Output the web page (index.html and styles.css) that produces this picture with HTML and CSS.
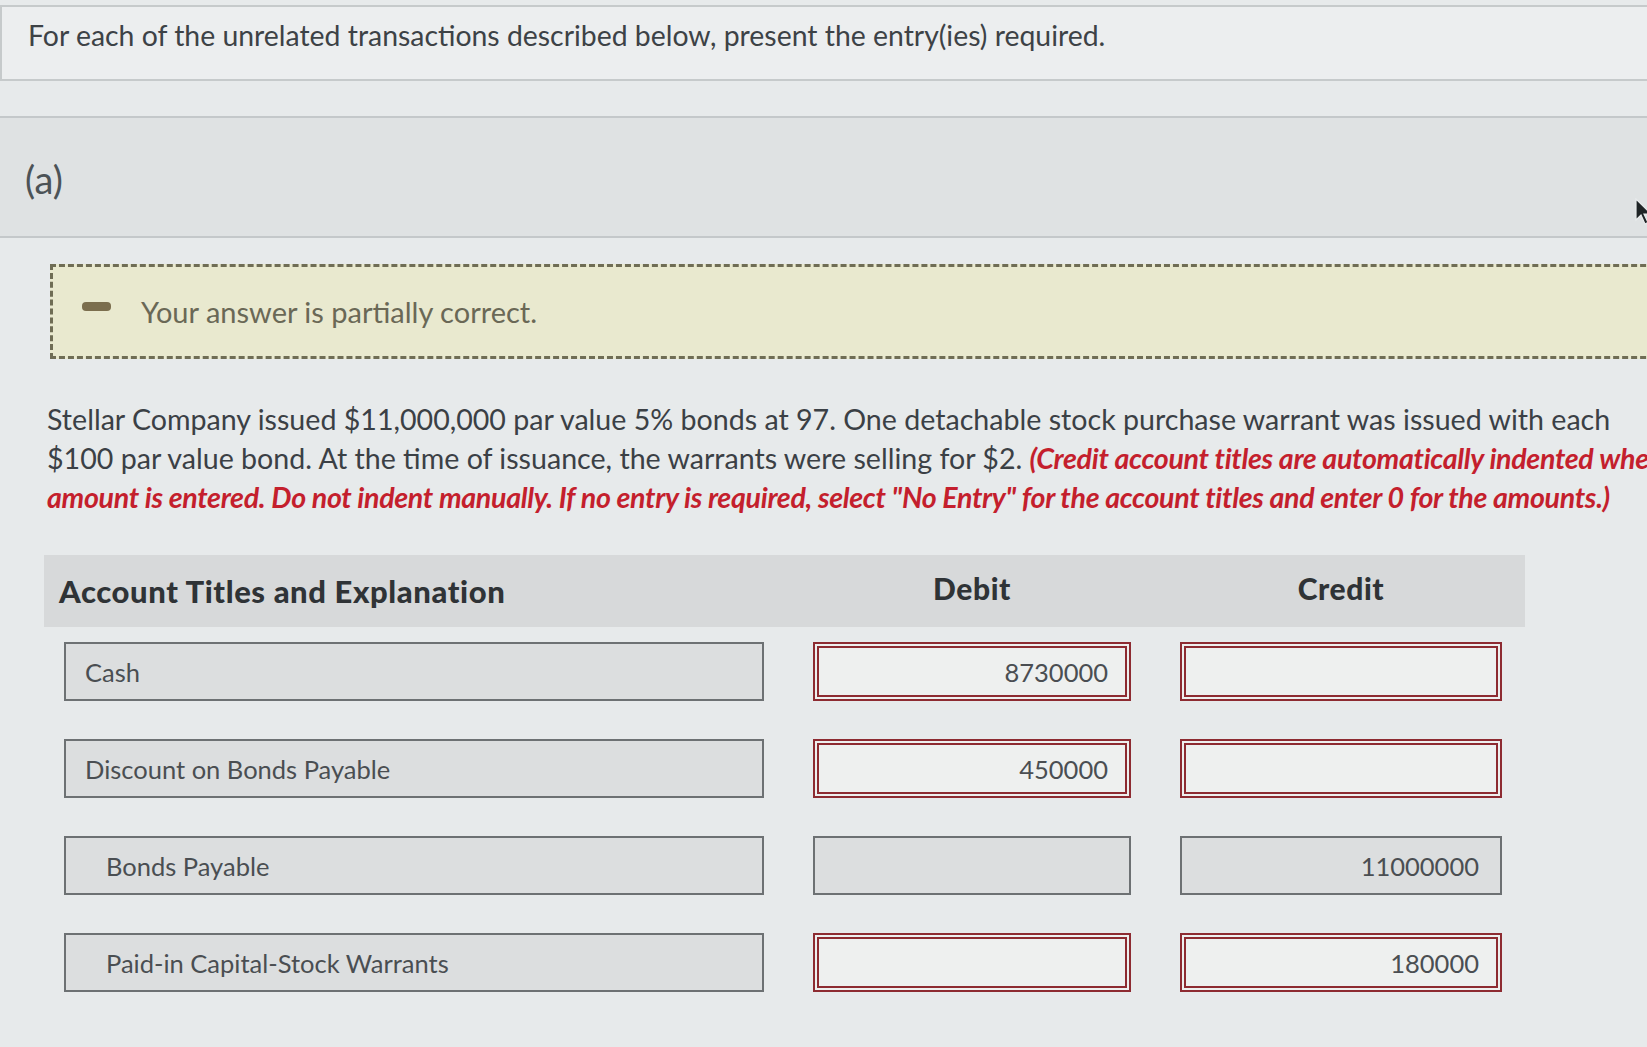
FILE: index.html
```html
<!DOCTYPE html>
<html lang="en">
<head>
<meta charset="utf-8">
<title>Journal entry</title>
<link rel="stylesheet" href="styles.css">
</head>
<body>
<div class="page">
  <div class="intro">For each of the unrelated transactions described below, present the entry(ies) required.</div>
  <div class="part-head">(a)</div>
  <div class="content">
    <div class="feedback"><span class="minus"></span><span class="feedback-text">Your answer is partially correct.</span></div>
    <p class="problem">Stellar Company issued $11,000,000 par value 5% bonds at 97. One detachable stock purchase warrant was issued with each<br>$100 par value bond. At the time of issuance, the warrants were selling for $2. <em class="note">(Credit account titles are automatically indented when the</em><br><em class="note">amount is entered. Do not indent manually. If no entry is required, select "No Entry" for the account titles and enter 0 for the amounts.)</em></p>
    <div class="journal">
      <div class="jhead">
        <div class="jh-acct">Account Titles and Explanation</div>
        <div class="jh-col">Debit</div>
        <div class="jh-col">Credit</div>
      </div>
      <div class="jrows">
        <div class="jrow">
          <div class="acct">Cash</div>
          <div class="amt wrong">8730000</div>
          <div class="amt wrong"></div>
        </div>
        <div class="jrow">
          <div class="acct">Discount on Bonds Payable</div>
          <div class="amt wrong">450000</div>
          <div class="amt wrong"></div>
        </div>
        <div class="jrow">
          <div class="acct indent">Bonds Payable</div>
          <div class="amt"></div>
          <div class="amt">11000000</div>
        </div>
        <div class="jrow">
          <div class="acct indent">Paid-in Capital-Stock Warrants</div>
          <div class="amt wrong"></div>
          <div class="amt wrong">180000</div>
        </div>
      </div>
    </div>
  </div>
  <svg class="cursor" width="20" height="30" viewBox="0 0 20 30"><path d="M2 1 L2 22 L7 17 L11 26 L14 24.5 L10 16 L17 16 Z" fill="#1f2426" stroke="#e8ebec" stroke-width="1.2"/></svg>
</div>
</body>
</html>
```

FILE: styles.css
```css
html, body {
  margin: 0;
  padding: 0;
}
body {
  background: #e7eaeb;
  overflow: hidden;
  font-family: Lato, "Open Sans", "Liberation Sans", sans-serif;
  color: #3c4145;
}
.page {
  position: relative;
  width: 1700px;
  height: 1047px;
  padding-top: 5px;
  box-sizing: border-box;
}
.intro {
  height: 76px;
  box-sizing: border-box;
  border: 2px solid #c6cacb;
  background: #eceeef;
  padding: 11px 0 0 26px;
  font-size: 28.4px;
  line-height: 34px;
  color: #3d4246;
}
.part-head {
  margin-top: 35px;
  height: 122px;
  box-sizing: border-box;
  border-top: 2px solid #c4c8ca;
  border-bottom: 2px solid #c4c8ca;
  background: #dfe2e3;
  display: flex;
  align-items: center;
  padding-left: 25px;
  padding-top: 4px;
  font-size: 38px;
  color: #4c5357;
}
.content {
  padding-left: 44px;
}
.feedback {
  margin-top: 26px;
  margin-left: 6px;
  height: 95px;
  box-sizing: border-box;
  border: 3px dashed #6f6d55;
  background: #e9e9cf;
  display: flex;
  align-items: center;
  padding-left: 29px;
}
.minus {
  width: 29px;
  height: 9px;
  border-radius: 4px;
  background: #7b6e4e;
  margin-right: 30px;
  margin-top: -10px;
}
.feedback-text {
  font-size: 29px;
  color: #6a6856;
}
.problem {
  margin: 41px 0 0 3px;
  font-size: 28.6px;
  line-height: 39px;
  white-space: nowrap;
  color: #3b4045;
}
.note {
  font-style: italic;
  font-weight: 700;
  color: #c41f2d;
  letter-spacing: -0.32px;
}
.journal {
  margin-top: 38px;
}
.jhead {
  width: 1481px;
  height: 72px;
  box-sizing: border-box;
  background: #d7d9da;
  display: grid;
  grid-template-columns: 705px 318px 322px;
  column-gap: 49px;
  align-items: center;
  padding-left: 15px;
  font-size: 31px;
  font-weight: 900;
  letter-spacing: 0.6px;
  color: #2f3336;
}
.jh-col {
  text-align: center;
  margin-top: -6px;
  font-size: 30px;
}
.jrows {
  display: flex;
  flex-direction: column;
  gap: 38px;
  padding-top: 15px;
  padding-left: 20px;
}
.jrow {
  display: grid;
  grid-template-columns: 700px 318px 322px;
  column-gap: 49px;
}
.acct, .amt {
  height: 59px;
  box-sizing: border-box;
  display: flex;
  align-items: center;
  font-size: 25.5px;
  color: #4a4e52;
}
.acct {
  background: #dcdedf;
  border: 2px solid #6d7173;
  padding-left: 19px;
}
.acct.indent {
  padding-left: 40px;
}
.amt {
  justify-content: flex-end;
  padding-right: 21px;
  background: #dcdedf;
  border: 2px solid #6d7173;
}
.amt.wrong {
  background: #eef0ef;
  border: 6px double #8d2b31;
  padding-right: 17px;
}
.cursor {
  position: absolute;
  left: 1634px;
  top: 198px;
}
```
